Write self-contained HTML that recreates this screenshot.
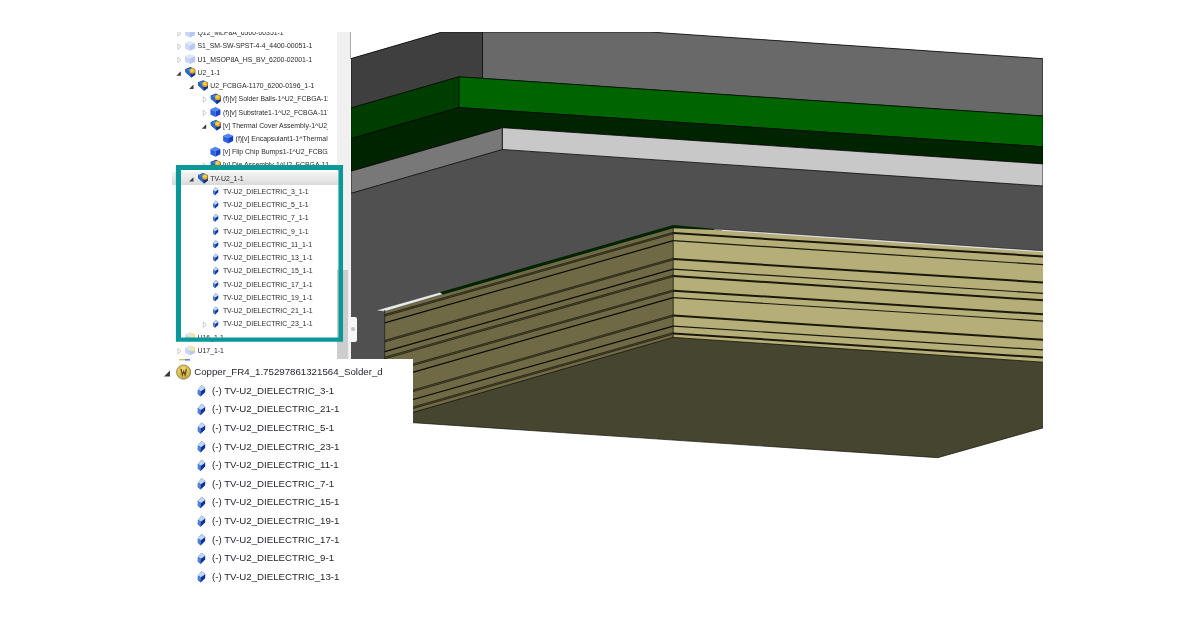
<!DOCTYPE html>
<html><head><meta charset="utf-8"><title>tree</title>
<style>
html,body{margin:0;padding:0;background:#fff;}
body{width:1200px;height:628px;position:relative;overflow:hidden;font-family:"Liberation Sans",sans-serif;}
.abs{position:absolute;}
.t{position:absolute;font-size:6.9px;line-height:10px;height:10px;color:#2a2a2a;white-space:nowrap;filter:blur(0.3px);}
.u{position:absolute;font-size:9.7px;line-height:14px;height:14px;color:#26262c;white-space:nowrap;filter:blur(0.3px);}
svg{position:absolute;left:0;top:0;}
</style></head><body>
<!-- 3D viewport -->
<svg width="1200" height="628" viewBox="0 0 1200 628">
<defs><clipPath id="vpc"><rect x="351" y="32" width="692" height="440"/></clipPath></defs>
<g clip-path="url(#vpc)">
<rect x="351" y="32" width="692" height="440" fill="#505050"/>
<polygon points="351.0,32.0 442.0,32.0 351.0,58.6" fill="#fff"/>
<polygon points="650.0,32.0 1043.0,32.0 1043.0,58.7" fill="#fff"/>
<polygon points="351.0,58.6 442.0,32.0 482.5,32.0 482.5,78.5 459.1,76.8 351.0,108.0" fill="#3f3f3f" stroke="#0a0a0a" stroke-width="0.8"/>
<polygon points="482.5,32.0 650.0,32.0 1043.0,58.7 1043.0,116.0 482.5,78.4" fill="#696969" stroke="#0a0a0a" stroke-width="0.8"/>
<polygon points="351.0,108.0 459.1,76.8 459.1,107.6 351.0,138.6" fill="#003d00" stroke="#001200" stroke-width="0.8"/>
<polygon points="459.1,76.8 1043.0,116.0 1043.0,146.8 459.1,107.6" fill="#006400" stroke="#001200" stroke-width="0.8"/>
<polygon points="351.0,138.6 459.1,107.6 1043.0,146.8 1043.0,163.9 502.4,127.7 351.0,171.2" fill="#002400" stroke="#000a00" stroke-width="0.8"/>
<polygon points="351.0,171.2 502.4,127.7 502.4,149.5 351.0,193.3" fill="#787878" stroke="#0a0a0a" stroke-width="0.8"/>
<polygon points="502.4,127.7 1043.0,163.9 1043.0,186.0 502.4,149.5" fill="#c8c8c8" stroke="#0a0a0a" stroke-width="0.8"/>
<polygon points="384.7,400.0 673.2,330.0 1043.0,355.0 1043.0,427.9 937.7,457.7 384.7,420.8" fill="#46452f"/>
<polygon points="351.0,418.6 937.7,457.7 1043.0,427.9 1043.0,480.0 351.0,480.0" fill="#fff"/>
<polygon points="384.7,310.5 673.2,226.5 673.2,337.4 384.7,420.6" fill="#6f6a45"/>
<polygon points="673.2,226.5 1043.0,251.6 1043.0,362.2 673.2,337.4" fill="#b5ae78"/>
<polygon points="375.5,310.6 440.0,292.3 443.0,294.2 384.7,311.4" fill="#ececec" stroke="#222" stroke-width="0.4"/>
<polygon points="440.0,292.2 673.2,224.9 673.2,228.2 443.0,294.4" fill="#002400"/>
<polygon points="673.2,224.9 716.0,229.0 716.0,230.0 673.2,228.3" fill="#002400"/>
<polygon points="714.0,229.0 723.0,229.6 723.0,230.6 714.0,230.0" fill="#777"/>
<polygon points="722.0,229.4 1043.0,250.9 1043.0,252.3 722.0,230.8" fill="#e0e0e0"/>
<line x1="722" y1="229.3" x2="1043" y2="250.7" stroke="#222" stroke-width="0.5"/>
<line x1="384.7" y1="310" x2="384.7" y2="425" stroke="#222" stroke-width="0.8"/>
<line x1="673.2" y1="226" x2="673.2" y2="337.4" stroke="#1a1a10" stroke-width="0.8"/>
<polyline points="384.7,420.6 673.2,337.4 1043.0,362.2" fill="none" stroke="#15140a" stroke-width="0.8"/>
<polyline points="384.7,420.8 937.7,457.7 1043.0,427.9" fill="none" stroke="#15140a" stroke-width="0.7"/>
<line x1="384.7" y1="315.4" x2="673.2" y2="233.1" stroke="#2a2714" stroke-width="2.2" stroke-opacity="0.4"/>
<line x1="384.7" y1="314.6" x2="673.2" y2="232.4" stroke="#14120a" stroke-width="0.6"/>
<line x1="384.7" y1="316.1" x2="673.2" y2="233.8" stroke="#14120a" stroke-width="0.6"/>
<line x1="673.2" y1="233.1" x2="1043" y2="256.4" stroke="#1a180c" stroke-width="2.0"/>
<line x1="384.7" y1="322.9" x2="673.2" y2="240.7" stroke="#0c0b05" stroke-width="1.2"/>
<line x1="673.2" y1="240.7" x2="1043" y2="264.6" stroke="#1a180c" stroke-width="1.2"/>
<line x1="384.7" y1="341.1" x2="673.2" y2="259.1" stroke="#2a2714" stroke-width="2.2" stroke-opacity="0.4"/>
<line x1="384.7" y1="340.4" x2="673.2" y2="258.4" stroke="#14120a" stroke-width="0.6"/>
<line x1="384.7" y1="341.9" x2="673.2" y2="259.8" stroke="#14120a" stroke-width="0.6"/>
<line x1="673.2" y1="259.1" x2="1043" y2="282.4" stroke="#1a180c" stroke-width="2.0"/>
<line x1="384.7" y1="351.7" x2="673.2" y2="269.1" stroke="#0c0b05" stroke-width="1.2"/>
<line x1="673.2" y1="269.1" x2="1043" y2="293.4" stroke="#1a180c" stroke-width="1.2"/>
<line x1="384.7" y1="358.0" x2="673.2" y2="275.9" stroke="#2a2714" stroke-width="2.2" stroke-opacity="0.4"/>
<line x1="384.7" y1="357.2" x2="673.2" y2="275.2" stroke="#14120a" stroke-width="0.6"/>
<line x1="384.7" y1="358.8" x2="673.2" y2="276.6" stroke="#14120a" stroke-width="0.6"/>
<line x1="673.2" y1="275.9" x2="1043" y2="300.3" stroke="#1a180c" stroke-width="2.0"/>
<line x1="384.7" y1="372.8" x2="673.2" y2="290.7" stroke="#2a2714" stroke-width="2.2" stroke-opacity="0.4"/>
<line x1="384.7" y1="372.1" x2="673.2" y2="290.0" stroke="#14120a" stroke-width="0.6"/>
<line x1="384.7" y1="373.6" x2="673.2" y2="291.4" stroke="#14120a" stroke-width="0.6"/>
<line x1="673.2" y1="290.7" x2="1043" y2="314.3" stroke="#1a180c" stroke-width="2.0"/>
<line x1="384.7" y1="380.3" x2="673.2" y2="297.6" stroke="#0c0b05" stroke-width="1.2"/>
<line x1="673.2" y1="297.6" x2="1043" y2="321.1" stroke="#1a180c" stroke-width="1.2"/>
<line x1="384.7" y1="399.0" x2="673.2" y2="315.6" stroke="#2a2714" stroke-width="2.2" stroke-opacity="0.4"/>
<line x1="384.7" y1="398.2" x2="673.2" y2="314.9" stroke="#14120a" stroke-width="0.6"/>
<line x1="384.7" y1="399.8" x2="673.2" y2="316.3" stroke="#14120a" stroke-width="0.6"/>
<line x1="673.2" y1="315.6" x2="1043" y2="339.7" stroke="#1a180c" stroke-width="2.0"/>
<line x1="384.7" y1="407.5" x2="673.2" y2="326.2" stroke="#0c0b05" stroke-width="1.2"/>
<line x1="673.2" y1="326.2" x2="1043" y2="349.9" stroke="#1a180c" stroke-width="1.2"/>
<line x1="384.7" y1="415.9" x2="673.2" y2="333.4" stroke="#2a2714" stroke-width="2.2" stroke-opacity="0.4"/>
<line x1="384.7" y1="415.1" x2="673.2" y2="332.7" stroke="#14120a" stroke-width="0.6"/>
<line x1="384.7" y1="416.6" x2="673.2" y2="334.1" stroke="#14120a" stroke-width="0.6"/>
<line x1="673.2" y1="333.4" x2="1043" y2="357.6" stroke="#1a180c" stroke-width="2.0"/>
</g>
</svg>
<!-- tree panel -->
<div class="abs" style="left:160px;top:32px;width:190.5px;height:340px;background:#fff;overflow:hidden"></div>
<div class="abs" style="left:336.9px;top:32px;width:12.9px;height:330px;background:#f0f0f0"></div><div class="abs" style="left:349.8px;top:32px;width:1px;height:330px;background:#f4f4f4"></div><div class="abs" style="left:349.9px;top:32px;width:0.9px;height:27px;background:#a8a8a8"></div>
<div class="abs" style="left:337.3px;top:270px;width:11.1px;height:89px;background:#cdcdcd"></div>
<div class="abs" style="left:172px;top:171.8px;width:166.5px;height:13.1px;background:linear-gradient(#f2f2f2,#e6e6e6 60%,#d9d9d9);"></div>
<div class="abs" style="left:0;top:32px;width:327.5px;height:330px;overflow:hidden"><div class="abs" style="left:0;top:-32px;width:400px;height:400px">
<div class="t" style="left:197.5px;top:28.06px">Q12_MLP8A_6500-00351-1</div>
<div class="t" style="left:197.5px;top:41.30px">S1_SM-SW-SPST-4-4_4400-00051-1</div>
<div class="t" style="left:197.5px;top:54.54px">U1_MSOP8A_HS_BV_6200-02001-1</div>
<div class="t" style="left:197.5px;top:67.78px">U2_1-1</div>
<div class="t" style="left:210.2px;top:81.02px">U2_FCBGA-1170_6200-0196_1-1</div>
<div class="t" style="left:222.9px;top:94.26px">(f)[v] Solder Balls-1^U2_FCBGA-1170</div>
<div class="t" style="left:222.9px;top:107.50px">(f)[v] Substrate1-1^U2_FCBGA-1170</div>
<div class="t" style="left:222.9px;top:120.74px">[v] Thermal Cover Assembly-1^U2_FCBGA</div>
<div class="t" style="left:235.6px;top:133.98px">(f)[v] Encapsulant1-1^Thermal Cover</div>
<div class="t" style="left:222.9px;top:147.22px">[v] Flip Chip Bumps1-1^U2_FCBGA-1170</div>
<div class="t" style="left:222.9px;top:160.46px">[v] Die Assembly-1^U2_FCBGA-1170</div>
<div class="t" style="left:210.2px;top:173.70px">TV-U2_1-1</div>
<div class="t" style="left:222.9px;top:186.94px">TV-U2_DIELECTRIC_3_1-1</div>
<div class="t" style="left:222.9px;top:200.18px">TV-U2_DIELECTRIC_5_1-1</div>
<div class="t" style="left:222.9px;top:213.42px">TV-U2_DIELECTRIC_7_1-1</div>
<div class="t" style="left:222.9px;top:226.66px">TV-U2_DIELECTRIC_9_1-1</div>
<div class="t" style="left:222.9px;top:239.90px">TV-U2_DIELECTRIC_11_1-1</div>
<div class="t" style="left:222.9px;top:253.14px">TV-U2_DIELECTRIC_13_1-1</div>
<div class="t" style="left:222.9px;top:266.38px">TV-U2_DIELECTRIC_15_1-1</div>
<div class="t" style="left:222.9px;top:279.62px">TV-U2_DIELECTRIC_17_1-1</div>
<div class="t" style="left:222.9px;top:292.86px">TV-U2_DIELECTRIC_19_1-1</div>
<div class="t" style="left:222.9px;top:306.10px">TV-U2_DIELECTRIC_21_1-1</div>
<div class="t" style="left:222.9px;top:319.34px">TV-U2_DIELECTRIC_23_1-1</div>
<div class="t" style="left:197.5px;top:332.58px">U16_1-1</div>
<div class="t" style="left:197.5px;top:345.82px">U17_1-1</div>
<div class="t" style="left:197.5px;top:359.06px">U18_1-1</div>
</div></div>
<svg width="1200" height="628" viewBox="0 0 1200 628">
<defs><clipPath id="trc"><rect x="160" y="32" width="177" height="330"/></clipPath></defs>
<g clip-path="url(#trc)">
<polygon transform="translate(179.40,33.36) scale(1.0)" points="-1.5,-2.8 1.6,0 -1.5,2.8" fill="#fff" stroke="#b4b4b4" stroke-width="0.7"/>
<g transform="translate(190.00,32.56) scale(1.0)">
<polygon points="0,-5 5,-2.8 0,-0.6 -5,-2.8" fill="#dfe7fb"/>
<polygon points="-5,-2.8 0,-0.6 0,5 -5,2.6" fill="#c9d6f6"/>
<polygon points="5,-2.8 0,-0.6 0,5 5,2.6" fill="#b7c8f2"/></g>
<polygon transform="translate(179.40,46.60) scale(1.0)" points="-1.5,-2.8 1.6,0 -1.5,2.8" fill="#fff" stroke="#b4b4b4" stroke-width="0.7"/>
<g transform="translate(190.00,45.80) scale(1.0)">
<polygon points="0,-5 5,-2.8 0,-0.6 -5,-2.8" fill="#dfe7fb"/>
<polygon points="-5,-2.8 0,-0.6 0,5 -5,2.6" fill="#c9d6f6"/>
<polygon points="5,-2.8 0,-0.6 0,5 5,2.6" fill="#b7c8f2"/></g>
<polygon transform="translate(179.40,59.84) scale(1.0)" points="-1.5,-2.8 1.6,0 -1.5,2.8" fill="#fff" stroke="#b4b4b4" stroke-width="0.7"/>
<g transform="translate(190.00,59.04) scale(1.0)">
<polygon points="0,-5 5,-2.8 0,-0.6 -5,-2.8" fill="#dfe7fb"/>
<polygon points="-5,-2.8 0,-0.6 0,5 -5,2.6" fill="#c9d6f6"/>
<polygon points="5,-2.8 0,-0.6 0,5 5,2.6" fill="#b7c8f2"/></g>
<polygon transform="translate(178.80,73.48) scale(1.0)" points="2.0,-2.2 2.0,2.2 -2.4,2.2" fill="#3c3c3c"/>
<g transform="translate(190.00,72.28) scale(1.0)">
<polygon points="-4.7,-3.3 0.5,-5.3 5.2,-3 5.2,2.4 1.4,5.3 -4.7,-0.2" fill="#163f96"/>
<polygon points="-4.7,-2.6 0.5,-4.4 5.2,-2.2 0.4,-0.2" fill="#3b82e0"/>
<polygon points="-4.7,-2.6 0.4,-0.2 1.4,5.3 -4.0,0.6" fill="#2a6ad0"/>
<polygon points="0.4,-0.2 5.2,-2.2 5.2,2.4 1.4,5.3" fill="#123684"/>
<circle cx="2.3" cy="-1.2" r="2.75" fill="#f0a81c"/>
<circle cx="2.0" cy="-1.9" r="1.7" fill="#fad23c"/>
</g>
<polygon transform="translate(191.50,86.72) scale(1.0)" points="2.0,-2.2 2.0,2.2 -2.4,2.2" fill="#3c3c3c"/>
<g transform="translate(202.70,85.52) scale(1.0)">
<polygon points="-4.7,-3.3 0.5,-5.3 5.2,-3 5.2,2.4 1.4,5.3 -4.7,-0.2" fill="#163f96"/>
<polygon points="-4.7,-2.6 0.5,-4.4 5.2,-2.2 0.4,-0.2" fill="#3b82e0"/>
<polygon points="-4.7,-2.6 0.4,-0.2 1.4,5.3 -4.0,0.6" fill="#2a6ad0"/>
<polygon points="0.4,-0.2 5.2,-2.2 5.2,2.4 1.4,5.3" fill="#123684"/>
<circle cx="2.3" cy="-1.2" r="2.75" fill="#f0a81c"/>
<circle cx="2.0" cy="-1.9" r="1.7" fill="#fad23c"/>
</g>
<polygon transform="translate(204.80,99.56) scale(1.0)" points="-1.5,-2.8 1.6,0 -1.5,2.8" fill="#fff" stroke="#b4b4b4" stroke-width="0.7"/>
<g transform="translate(215.40,98.76) scale(1.0)">
<polygon points="-4.7,-3.3 0.5,-5.3 5.2,-3 5.2,2.4 1.4,5.3 -4.7,-0.2" fill="#163f96"/>
<polygon points="-4.7,-2.6 0.5,-4.4 5.2,-2.2 0.4,-0.2" fill="#3b82e0"/>
<polygon points="-4.7,-2.6 0.4,-0.2 1.4,5.3 -4.0,0.6" fill="#2a6ad0"/>
<polygon points="0.4,-0.2 5.2,-2.2 5.2,2.4 1.4,5.3" fill="#123684"/>
<circle cx="2.3" cy="-1.2" r="2.75" fill="#f0a81c"/>
<circle cx="2.0" cy="-1.9" r="1.7" fill="#fad23c"/>
</g>
<polygon transform="translate(204.80,112.80) scale(1.0)" points="-1.5,-2.8 1.6,0 -1.5,2.8" fill="#fff" stroke="#b4b4b4" stroke-width="0.7"/>
<g transform="translate(215.40,112.00) scale(1.0)">
<polygon points="0,-5 5,-2.8 0,-0.6 -5,-2.8" fill="#4f86f0"/>
<polygon points="-5,-2.8 0,-0.6 0,5 -5,2.6" fill="#2f62e0"/>
<polygon points="5,-2.8 0,-0.6 0,5 5,2.6" fill="#1740c8"/>
</g>
<polygon transform="translate(204.20,126.44) scale(1.0)" points="2.0,-2.2 2.0,2.2 -2.4,2.2" fill="#3c3c3c"/>
<g transform="translate(215.40,125.24) scale(1.0)">
<polygon points="-4.7,-3.3 0.5,-5.3 5.2,-3 5.2,2.4 1.4,5.3 -4.7,-0.2" fill="#163f96"/>
<polygon points="-4.7,-2.6 0.5,-4.4 5.2,-2.2 0.4,-0.2" fill="#3b82e0"/>
<polygon points="-4.7,-2.6 0.4,-0.2 1.4,5.3 -4.0,0.6" fill="#2a6ad0"/>
<polygon points="0.4,-0.2 5.2,-2.2 5.2,2.4 1.4,5.3" fill="#123684"/>
<circle cx="2.3" cy="-1.2" r="2.75" fill="#f0a81c"/>
<circle cx="2.0" cy="-1.9" r="1.7" fill="#fad23c"/>
</g>

<g transform="translate(228.10,138.48) scale(1.0)">
<polygon points="0,-5 5,-2.8 0,-0.6 -5,-2.8" fill="#4f86f0"/>
<polygon points="-5,-2.8 0,-0.6 0,5 -5,2.6" fill="#2f62e0"/>
<polygon points="5,-2.8 0,-0.6 0,5 5,2.6" fill="#1740c8"/>
</g>

<g transform="translate(215.40,151.72) scale(1.0)">
<polygon points="0,-5 5,-2.8 0,-0.6 -5,-2.8" fill="#4f86f0"/>
<polygon points="-5,-2.8 0,-0.6 0,5 -5,2.6" fill="#2f62e0"/>
<polygon points="5,-2.8 0,-0.6 0,5 5,2.6" fill="#1740c8"/>
</g>
<polygon transform="translate(204.80,165.76) scale(1.0)" points="-1.5,-2.8 1.6,0 -1.5,2.8" fill="#fff" stroke="#b4b4b4" stroke-width="0.7"/>
<g transform="translate(215.40,164.96) scale(1.0)">
<polygon points="-4.7,-3.3 0.5,-5.3 5.2,-3 5.2,2.4 1.4,5.3 -4.7,-0.2" fill="#163f96"/>
<polygon points="-4.7,-2.6 0.5,-4.4 5.2,-2.2 0.4,-0.2" fill="#3b82e0"/>
<polygon points="-4.7,-2.6 0.4,-0.2 1.4,5.3 -4.0,0.6" fill="#2a6ad0"/>
<polygon points="0.4,-0.2 5.2,-2.2 5.2,2.4 1.4,5.3" fill="#123684"/>
<circle cx="2.3" cy="-1.2" r="2.75" fill="#f0a81c"/>
<circle cx="2.0" cy="-1.9" r="1.7" fill="#fad23c"/>
</g>
<polygon transform="translate(191.50,179.40) scale(1.0)" points="2.0,-2.2 2.0,2.2 -2.4,2.2" fill="#3c3c3c"/>
<g transform="translate(202.70,178.20) scale(1.0)">
<polygon points="-4.7,-3.3 0.5,-5.3 5.2,-3 5.2,2.4 1.4,5.3 -4.7,-0.2" fill="#163f96"/>
<polygon points="-4.7,-2.6 0.5,-4.4 5.2,-2.2 0.4,-0.2" fill="#3b82e0"/>
<polygon points="-4.7,-2.6 0.4,-0.2 1.4,5.3 -4.0,0.6" fill="#2a6ad0"/>
<polygon points="0.4,-0.2 5.2,-2.2 5.2,2.4 1.4,5.3" fill="#123684"/>
<circle cx="2.3" cy="-1.2" r="2.75" fill="#f0a81c"/>
<circle cx="2.0" cy="-1.9" r="1.7" fill="#fad23c"/>
</g>

<g transform="translate(215.60,191.24) scale(1.0)">
<polygon points="0.14,-3.9 2.7,-1.76 2.64,1.0 -0.5,4.1 -2.54,2.3 -2.46,-0.77" fill="#10309a"/>
<polygon points="0.14,-3.9 2.7,-1.76 -0.3,0.4 -2.46,-0.77" fill="#c0d8f6"/>
<polygon points="-2.46,-0.77 -0.3,0.4 -0.6,4.0 -2.54,2.3" fill="#4d85d6"/>
</g>

<g transform="translate(215.60,204.48) scale(1.0)">
<polygon points="0.14,-3.9 2.7,-1.76 2.64,1.0 -0.5,4.1 -2.54,2.3 -2.46,-0.77" fill="#10309a"/>
<polygon points="0.14,-3.9 2.7,-1.76 -0.3,0.4 -2.46,-0.77" fill="#c0d8f6"/>
<polygon points="-2.46,-0.77 -0.3,0.4 -0.6,4.0 -2.54,2.3" fill="#4d85d6"/>
</g>

<g transform="translate(215.60,217.72) scale(1.0)">
<polygon points="0.14,-3.9 2.7,-1.76 2.64,1.0 -0.5,4.1 -2.54,2.3 -2.46,-0.77" fill="#10309a"/>
<polygon points="0.14,-3.9 2.7,-1.76 -0.3,0.4 -2.46,-0.77" fill="#c0d8f6"/>
<polygon points="-2.46,-0.77 -0.3,0.4 -0.6,4.0 -2.54,2.3" fill="#4d85d6"/>
</g>

<g transform="translate(215.60,230.96) scale(1.0)">
<polygon points="0.14,-3.9 2.7,-1.76 2.64,1.0 -0.5,4.1 -2.54,2.3 -2.46,-0.77" fill="#10309a"/>
<polygon points="0.14,-3.9 2.7,-1.76 -0.3,0.4 -2.46,-0.77" fill="#c0d8f6"/>
<polygon points="-2.46,-0.77 -0.3,0.4 -0.6,4.0 -2.54,2.3" fill="#4d85d6"/>
</g>

<g transform="translate(215.60,244.20) scale(1.0)">
<polygon points="0.14,-3.9 2.7,-1.76 2.64,1.0 -0.5,4.1 -2.54,2.3 -2.46,-0.77" fill="#10309a"/>
<polygon points="0.14,-3.9 2.7,-1.76 -0.3,0.4 -2.46,-0.77" fill="#c0d8f6"/>
<polygon points="-2.46,-0.77 -0.3,0.4 -0.6,4.0 -2.54,2.3" fill="#4d85d6"/>
</g>

<g transform="translate(215.60,257.44) scale(1.0)">
<polygon points="0.14,-3.9 2.7,-1.76 2.64,1.0 -0.5,4.1 -2.54,2.3 -2.46,-0.77" fill="#10309a"/>
<polygon points="0.14,-3.9 2.7,-1.76 -0.3,0.4 -2.46,-0.77" fill="#c0d8f6"/>
<polygon points="-2.46,-0.77 -0.3,0.4 -0.6,4.0 -2.54,2.3" fill="#4d85d6"/>
</g>

<g transform="translate(215.60,270.68) scale(1.0)">
<polygon points="0.14,-3.9 2.7,-1.76 2.64,1.0 -0.5,4.1 -2.54,2.3 -2.46,-0.77" fill="#10309a"/>
<polygon points="0.14,-3.9 2.7,-1.76 -0.3,0.4 -2.46,-0.77" fill="#c0d8f6"/>
<polygon points="-2.46,-0.77 -0.3,0.4 -0.6,4.0 -2.54,2.3" fill="#4d85d6"/>
</g>

<g transform="translate(215.60,283.92) scale(1.0)">
<polygon points="0.14,-3.9 2.7,-1.76 2.64,1.0 -0.5,4.1 -2.54,2.3 -2.46,-0.77" fill="#10309a"/>
<polygon points="0.14,-3.9 2.7,-1.76 -0.3,0.4 -2.46,-0.77" fill="#c0d8f6"/>
<polygon points="-2.46,-0.77 -0.3,0.4 -0.6,4.0 -2.54,2.3" fill="#4d85d6"/>
</g>

<g transform="translate(215.60,297.16) scale(1.0)">
<polygon points="0.14,-3.9 2.7,-1.76 2.64,1.0 -0.5,4.1 -2.54,2.3 -2.46,-0.77" fill="#10309a"/>
<polygon points="0.14,-3.9 2.7,-1.76 -0.3,0.4 -2.46,-0.77" fill="#c0d8f6"/>
<polygon points="-2.46,-0.77 -0.3,0.4 -0.6,4.0 -2.54,2.3" fill="#4d85d6"/>
</g>

<g transform="translate(215.60,310.40) scale(1.0)">
<polygon points="0.14,-3.9 2.7,-1.76 2.64,1.0 -0.5,4.1 -2.54,2.3 -2.46,-0.77" fill="#10309a"/>
<polygon points="0.14,-3.9 2.7,-1.76 -0.3,0.4 -2.46,-0.77" fill="#c0d8f6"/>
<polygon points="-2.46,-0.77 -0.3,0.4 -0.6,4.0 -2.54,2.3" fill="#4d85d6"/>
</g>
<polygon transform="translate(204.80,324.64) scale(1.0)" points="-1.5,-2.8 1.6,0 -1.5,2.8" fill="#fff" stroke="#b4b4b4" stroke-width="0.7"/>
<g transform="translate(215.60,323.64) scale(1.0)">
<polygon points="0.14,-3.9 2.7,-1.76 2.64,1.0 -0.5,4.1 -2.54,2.3 -2.46,-0.77" fill="#10309a"/>
<polygon points="0.14,-3.9 2.7,-1.76 -0.3,0.4 -2.46,-0.77" fill="#c0d8f6"/>
<polygon points="-2.46,-0.77 -0.3,0.4 -0.6,4.0 -2.54,2.3" fill="#4d85d6"/>
</g>
<polygon transform="translate(179.40,337.88) scale(1.0)" points="-1.5,-2.8 1.6,0 -1.5,2.8" fill="#fff" stroke="#b4b4b4" stroke-width="0.7"/>
<g transform="translate(190.00,337.08) scale(1.0)">
<polygon points="0,-5 5,-2.8 0,-0.6 -5,-2.8" fill="#dfe7fb"/>
<polygon points="-5,-2.8 0,-0.6 0,5 -5,2.6" fill="#c9d6f6"/>
<polygon points="5,-2.8 0,-0.6 0,5 5,2.6" fill="#b7c8f2"/><circle cx="2.3" cy="-1.6" r="2.6" fill="#f6e6a0"/></g>
<polygon transform="translate(179.40,351.12) scale(1.0)" points="-1.5,-2.8 1.6,0 -1.5,2.8" fill="#fff" stroke="#b4b4b4" stroke-width="0.7"/>
<g transform="translate(190.00,350.32) scale(1.0)">
<polygon points="0,-5 5,-2.8 0,-0.6 -5,-2.8" fill="#dfe7fb"/>
<polygon points="-5,-2.8 0,-0.6 0,5 -5,2.6" fill="#c9d6f6"/>
<polygon points="5,-2.8 0,-0.6 0,5 5,2.6" fill="#b7c8f2"/><circle cx="2.3" cy="-1.6" r="2.6" fill="#f6e6a0"/></g>
<polygon transform="translate(179.40,364.36) scale(1.0)" points="-1.5,-2.8 1.6,0 -1.5,2.8" fill="#fff" stroke="#b4b4b4" stroke-width="0.7"/>
<g transform="translate(190.00,363.56) scale(1.0)">
<polygon points="0,-5 5,-2.8 0,-0.6 -5,-2.8" fill="#dfe7fb"/>
<polygon points="-5,-2.8 0,-0.6 0,5 -5,2.6" fill="#c9d6f6"/>
<polygon points="5,-2.8 0,-0.6 0,5 5,2.6" fill="#b7c8f2"/><circle cx="2.3" cy="-1.6" r="2.6" fill="#f6e6a0"/></g>
</g>
</svg>
<!-- splitter handle -->
<div class="abs" style="left:348.1px;top:316.5px;width:8.6px;height:25.2px;background:#f6f6f6;border-radius:0 2px 2px 0"></div>
<div class="abs" style="left:351.3px;top:327.3px;width:3.4px;height:3.4px;background:#c4c4c4;border-radius:50%"></div>
<!-- teal highlight -->
<svg width="1200" height="628" viewBox="0 0 1200 628"><path fill-rule="evenodd" fill="#0a9898" d="M175.9 164.9H343.05V341.8H175.9Z M181 170H338.5V337.4H181Z"/></svg>
<!-- lower overlay -->
<div class="abs" style="left:150px;top:359px;width:263px;height:250px;background:#fff"></div>
<div class="u" style="left:194.2px;top:364.9px">Copper_FR4_1.75297861321564_Solder_d</div>
<div class="u" style="left:212px;top:383.80px">(-) TV-U2_DIELECTRIC_3-1</div>
<div class="u" style="left:212px;top:402.40px">(-) TV-U2_DIELECTRIC_21-1</div>
<div class="u" style="left:212px;top:421.00px">(-) TV-U2_DIELECTRIC_5-1</div>
<div class="u" style="left:212px;top:439.60px">(-) TV-U2_DIELECTRIC_23-1</div>
<div class="u" style="left:212px;top:458.20px">(-) TV-U2_DIELECTRIC_11-1</div>
<div class="u" style="left:212px;top:476.80px">(-) TV-U2_DIELECTRIC_7-1</div>
<div class="u" style="left:212px;top:495.40px">(-) TV-U2_DIELECTRIC_15-1</div>
<div class="u" style="left:212px;top:514.00px">(-) TV-U2_DIELECTRIC_19-1</div>
<div class="u" style="left:212px;top:532.60px">(-) TV-U2_DIELECTRIC_17-1</div>
<div class="u" style="left:212px;top:551.20px">(-) TV-U2_DIELECTRIC_9-1</div>
<div class="u" style="left:212px;top:569.80px">(-) TV-U2_DIELECTRIC_13-1</div>
<svg width="1200" height="628" viewBox="0 0 1200 628">
<polygon points="170,370.6 170,376.6 164,376.6" fill="#3a3a3a"/>
<defs><radialGradient id="gold" cx="0.45" cy="0.4" r="0.6"><stop offset="0" stop-color="#f3df82"/><stop offset="0.7" stop-color="#dcc057"/><stop offset="1" stop-color="#b39a3e"/></radialGradient></defs>
<circle cx="183.6" cy="372.1" r="7.1" fill="url(#gold)" stroke="#7d7038" stroke-width="0.7"/>
<path d="M180.4 367.2 L180.9 376.6 M186.6 367 L186.4 376.8" fill="none" stroke="#c9ab45" stroke-width="1.3"/>
<path d="M181.2 369.2 L182.4 375 L183.7 371.2 L185 375 L186.2 369.2" fill="none" stroke="#5a4a18" stroke-width="1.15"/>
<rect x="179.2" y="359" width="6" height="1.4" fill="#c7b86a"/><rect x="185" y="359" width="5" height="1.6" fill="#6f7fe0"/>
<g transform="translate(201.40,390.80) scale(1.42)">
<polygon points="0.14,-3.9 2.7,-1.76 2.64,1.0 -0.5,4.1 -2.54,2.3 -2.46,-0.77" fill="#10309a"/>
<polygon points="0.14,-3.9 2.7,-1.76 -0.3,0.4 -2.46,-0.77" fill="#c0d8f6"/>
<polygon points="-2.46,-0.77 -0.3,0.4 -0.6,4.0 -2.54,2.3" fill="#4d85d6"/>
</g>
<g transform="translate(201.40,409.40) scale(1.42)">
<polygon points="0.14,-3.9 2.7,-1.76 2.64,1.0 -0.5,4.1 -2.54,2.3 -2.46,-0.77" fill="#10309a"/>
<polygon points="0.14,-3.9 2.7,-1.76 -0.3,0.4 -2.46,-0.77" fill="#c0d8f6"/>
<polygon points="-2.46,-0.77 -0.3,0.4 -0.6,4.0 -2.54,2.3" fill="#4d85d6"/>
</g>
<g transform="translate(201.40,428.00) scale(1.42)">
<polygon points="0.14,-3.9 2.7,-1.76 2.64,1.0 -0.5,4.1 -2.54,2.3 -2.46,-0.77" fill="#10309a"/>
<polygon points="0.14,-3.9 2.7,-1.76 -0.3,0.4 -2.46,-0.77" fill="#c0d8f6"/>
<polygon points="-2.46,-0.77 -0.3,0.4 -0.6,4.0 -2.54,2.3" fill="#4d85d6"/>
</g>
<g transform="translate(201.40,446.60) scale(1.42)">
<polygon points="0.14,-3.9 2.7,-1.76 2.64,1.0 -0.5,4.1 -2.54,2.3 -2.46,-0.77" fill="#10309a"/>
<polygon points="0.14,-3.9 2.7,-1.76 -0.3,0.4 -2.46,-0.77" fill="#c0d8f6"/>
<polygon points="-2.46,-0.77 -0.3,0.4 -0.6,4.0 -2.54,2.3" fill="#4d85d6"/>
</g>
<g transform="translate(201.40,465.20) scale(1.42)">
<polygon points="0.14,-3.9 2.7,-1.76 2.64,1.0 -0.5,4.1 -2.54,2.3 -2.46,-0.77" fill="#10309a"/>
<polygon points="0.14,-3.9 2.7,-1.76 -0.3,0.4 -2.46,-0.77" fill="#c0d8f6"/>
<polygon points="-2.46,-0.77 -0.3,0.4 -0.6,4.0 -2.54,2.3" fill="#4d85d6"/>
</g>
<g transform="translate(201.40,483.80) scale(1.42)">
<polygon points="0.14,-3.9 2.7,-1.76 2.64,1.0 -0.5,4.1 -2.54,2.3 -2.46,-0.77" fill="#10309a"/>
<polygon points="0.14,-3.9 2.7,-1.76 -0.3,0.4 -2.46,-0.77" fill="#c0d8f6"/>
<polygon points="-2.46,-0.77 -0.3,0.4 -0.6,4.0 -2.54,2.3" fill="#4d85d6"/>
</g>
<g transform="translate(201.40,502.40) scale(1.42)">
<polygon points="0.14,-3.9 2.7,-1.76 2.64,1.0 -0.5,4.1 -2.54,2.3 -2.46,-0.77" fill="#10309a"/>
<polygon points="0.14,-3.9 2.7,-1.76 -0.3,0.4 -2.46,-0.77" fill="#c0d8f6"/>
<polygon points="-2.46,-0.77 -0.3,0.4 -0.6,4.0 -2.54,2.3" fill="#4d85d6"/>
</g>
<g transform="translate(201.40,521.00) scale(1.42)">
<polygon points="0.14,-3.9 2.7,-1.76 2.64,1.0 -0.5,4.1 -2.54,2.3 -2.46,-0.77" fill="#10309a"/>
<polygon points="0.14,-3.9 2.7,-1.76 -0.3,0.4 -2.46,-0.77" fill="#c0d8f6"/>
<polygon points="-2.46,-0.77 -0.3,0.4 -0.6,4.0 -2.54,2.3" fill="#4d85d6"/>
</g>
<g transform="translate(201.40,539.60) scale(1.42)">
<polygon points="0.14,-3.9 2.7,-1.76 2.64,1.0 -0.5,4.1 -2.54,2.3 -2.46,-0.77" fill="#10309a"/>
<polygon points="0.14,-3.9 2.7,-1.76 -0.3,0.4 -2.46,-0.77" fill="#c0d8f6"/>
<polygon points="-2.46,-0.77 -0.3,0.4 -0.6,4.0 -2.54,2.3" fill="#4d85d6"/>
</g>
<g transform="translate(201.40,558.20) scale(1.42)">
<polygon points="0.14,-3.9 2.7,-1.76 2.64,1.0 -0.5,4.1 -2.54,2.3 -2.46,-0.77" fill="#10309a"/>
<polygon points="0.14,-3.9 2.7,-1.76 -0.3,0.4 -2.46,-0.77" fill="#c0d8f6"/>
<polygon points="-2.46,-0.77 -0.3,0.4 -0.6,4.0 -2.54,2.3" fill="#4d85d6"/>
</g>
<g transform="translate(201.40,576.80) scale(1.42)">
<polygon points="0.14,-3.9 2.7,-1.76 2.64,1.0 -0.5,4.1 -2.54,2.3 -2.46,-0.77" fill="#10309a"/>
<polygon points="0.14,-3.9 2.7,-1.76 -0.3,0.4 -2.46,-0.77" fill="#c0d8f6"/>
<polygon points="-2.46,-0.77 -0.3,0.4 -0.6,4.0 -2.54,2.3" fill="#4d85d6"/>
</g>
</svg>
</body></html>
